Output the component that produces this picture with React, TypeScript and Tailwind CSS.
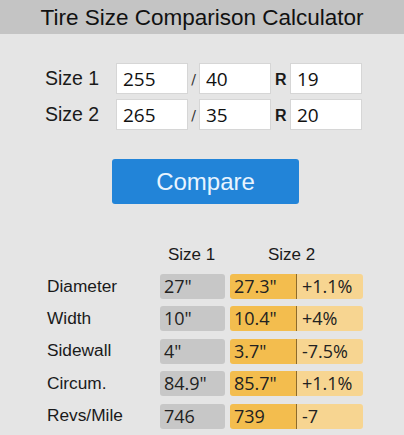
import React from "react";

const sizes = [
    { label: "Size 1", width: "255", ratio: "40", rim: "19" },
    { label: "Size 2", width: "265", ratio: "35", rim: "20" },
];

const rows = [
    { name: "Diameter", a: '27"', b: '27.3"', diff: "+1.1%" },
    { name: "Width", a: '10"', b: '10.4"', diff: "+4%" },
    { name: "Sidewall", a: '4"', b: '3.7"', diff: "-7.5%" },
    { name: "Circum.", a: '84.9"', b: '85.7"', diff: "+1.1%" },
    { name: "Revs/Mile", a: "746", b: "739", diff: "-7" },
];

const inputCls =
    "w-[72px] h-[31px] px-[6px] bg-white border border-[#d6d6d6] text-[19px] text-[#111] outline-none font-['Open_Sans',sans-serif]";

export default function App() {
    return (
        <div className="w-[404px] h-[435px] bg-[#e5e5e5] overflow-hidden font-['Liberation_Sans',Arial,sans-serif] text-[#1a1a1a]">
            <div className="h-[34px] bg-[#c4c4c4] text-center text-[22.5px] leading-[35px] text-[#111]">
                Tire Size Comparison Calculator
            </div>

            <div className="mt-[29px] flex flex-col gap-[5px] pl-[45px]">
                {sizes.map(s => (
                    <div key={s.label} className="flex items-center h-[31px]">
                        <span className="w-[71px] text-[19.5px]">{s.label}</span>
                        <input className={inputCls} defaultValue={s.width} />
                        <span className="w-[11px] pt-[2px] text-center text-[14px] text-[#333] font-['DejaVu_Sans',sans-serif]">/</span>
                        <input className={inputCls} defaultValue={s.ratio} />
                        <span className="w-[19px] pl-[4px] pt-[2px] text-[16px] font-bold">R</span>
                        <input className={inputCls} defaultValue={s.rim} />
                    </div>
                ))}
            </div>

            <div className="mt-[29px] pl-[112px]">
                <button className="w-[187px] h-[45px] rounded-[3px] bg-[#2284d8] text-[#e8f4ff] text-[24px]">
                    Compare
                </button>
            </div>

            <div className="mt-[41px] flex h-[20px] items-center text-[17px]">
                <span className="w-[168px]" />
                <span className="w-[100px]">Size 1</span>
                <span>Size 2</span>
            </div>

            <div className="mt-[9px] flex flex-col gap-[7.4px] pl-[47px]">
                {rows.map(r => (
                    <div key={r.name} className="flex items-center h-[25px] text-[18px] font-['Open_Sans',sans-serif]">
                        <span className="w-[113px] text-[17.3px] font-['Liberation_Sans',Arial,sans-serif]">{r.name}</span>
                        <div className="w-[65px] h-full rounded-[3px] bg-[#c7c7c7] pl-[4px] leading-[25px] text-[#222]">{r.a}</div>
                        <div className="ml-[5px] flex h-full w-[133px] rounded-[3px] overflow-hidden">
                            <div className="w-[67px] h-full bg-[#f3bd4e] border-r border-[#8c6a2c] pl-[4px] leading-[25px] text-[#222]">{r.b}</div>
                            <div className="flex-1 h-full bg-[#f7d591] pl-[5px] leading-[25px] text-[#222]">{r.diff}</div>
                        </div>
                    </div>
                ))}
            </div>
        </div>
    );
}
